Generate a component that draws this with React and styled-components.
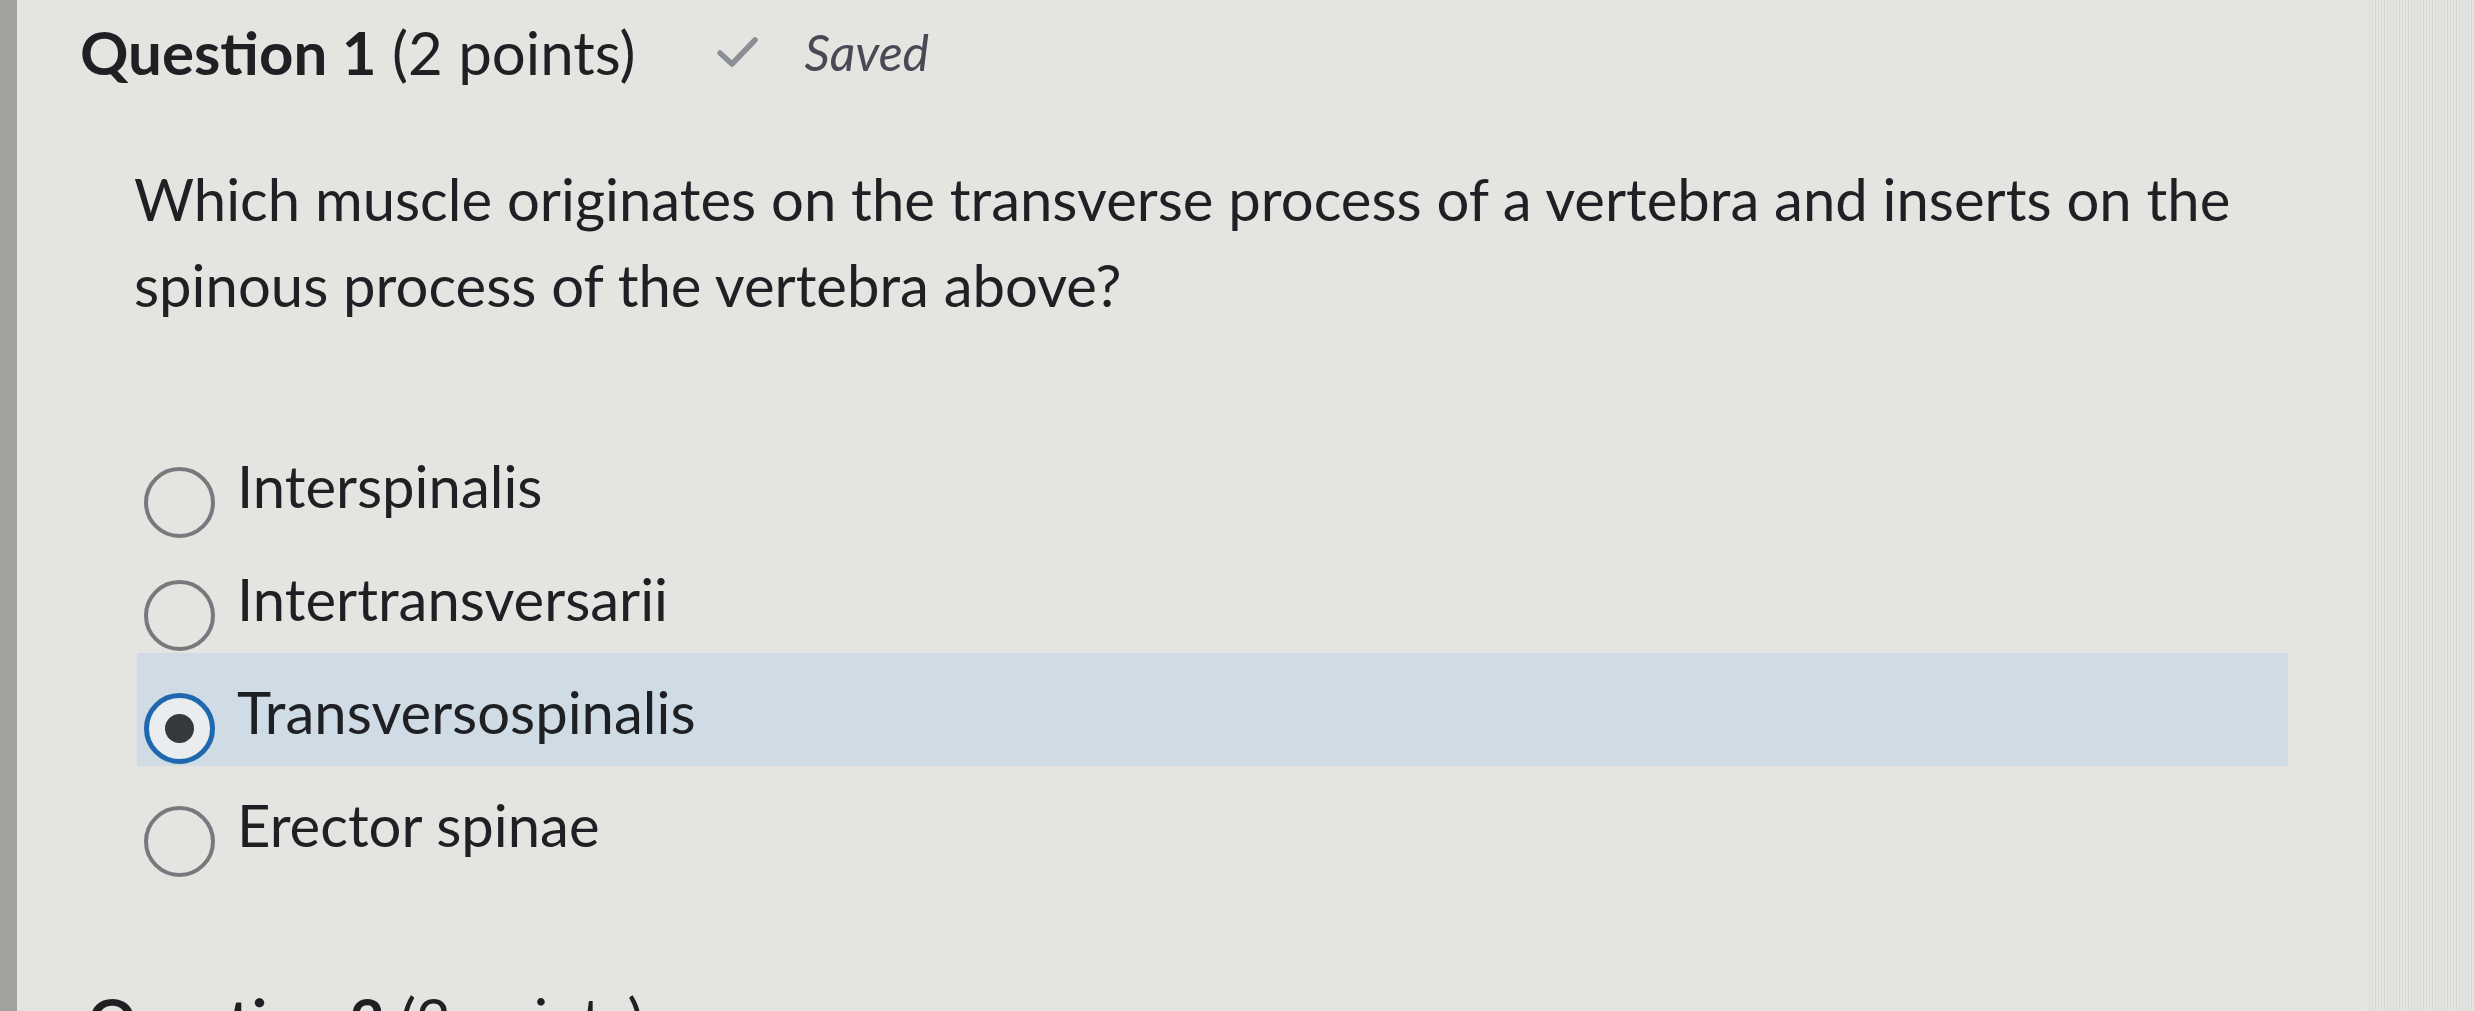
import React from "react";
import styled, { createGlobalStyle } from "styled-components";

const GlobalStyle = createGlobalStyle`
  body {
    margin: 0;
    background: #e4e5e1;
    font-family: Lato, "Open Sans", "Liberation Sans", sans-serif;
    color: #1f2024;
  }
`;

const Page = styled.div`
  display: flex;
  height: 1011px;
  overflow: hidden;
`;

const LeftEdge = styled.div`
  width: 17px;
  flex-shrink: 0;
  background: #a1a29e;
`;

const RightBand = styled.div`
  width: 107px;
  flex-shrink: 0;
  background: repeating-linear-gradient(
    90deg,
    #e5e6e2 0px,
    #e5e6e2 2px,
    #d9dad6 2px,
    #d9dad6 3px
  );
`;

const Main = styled.main`
  flex: 1;
  padding: 16px 0 0 63px;
  min-width: 0;
`;

const Header = styled.div`
  display: flex;
  align-items: center;
  height: 72px;
`;

const Title = styled.h2`
  margin: 0;
  font-size: 60px;
  line-height: 72px;
  font-weight: 400;
  white-space: nowrap;

  b {
    font-weight: 700;
  }
`;

const SavedStatus = styled.div`
  display: flex;
  align-items: center;
  margin-left: 82px;
  gap: 46px;
  color: #484955;
  font-size: 50px;
  font-style: italic;
`;

const QuestionText = styled.p`
  margin: 68px 0 0 54px;
  max-width: 2180px;
  font-size: 58px;
  line-height: 86px;
`;

const OptionList = styled.div`
  margin: 99px 0 0 57px;
  width: 2151px;
  display: flex;
  flex-direction: column;
`;

const Option = styled.label`
  display: flex;
  align-items: flex-start;
  box-sizing: border-box;
  height: 113px;
  padding: 24px 0 0 7px;
  background: ${(p) => (p.$selected ? "#cfdbe5" : "transparent")};
`;

const Radio = styled.span`
  box-sizing: border-box;
  width: 71px;
  height: 71px;
  margin-top: 16px;
  border-radius: 50%;
  flex-shrink: 0;
  display: flex;
  align-items: center;
  justify-content: center;
  border: ${(p) => (p.$checked ? "5px solid #1f67ae" : "4px solid #77797d")};
  background: ${(p) => (p.$checked ? "#e9edf0" : "transparent")};

  &::after {
    content: "";
    display: ${(p) => (p.$checked ? "block" : "none")};
    width: 29px;
    height: 29px;
    border-radius: 50%;
    background: #35383c;
  }
`;

const OptionLabel = styled.span`
  margin-left: 22px;
  font-size: 58px;
  line-height: 1.2;
`;

const NextTitle = styled(Title)`
  margin: 104px 0 0 8px;
`;

const CheckIcon = () => (
  <svg width="41" height="32" viewBox="0 0 41 32" fill="none">
    <polyline
      points="3,17 15,28 38,4"
      stroke="#8b8f94"
      strokeWidth="5.5"
      strokeLinecap="round"
      strokeLinejoin="round"
    />
  </svg>
);

const options = [
  "Interspinalis",
  "Intertransversarii",
  "Transversospinalis",
  "Erector spinae",
];

export default function App() {
  const selected = 2;

  return (
    <>
      <GlobalStyle />
      <Page>
        <LeftEdge />
        <Main>
          <Header>
            <Title>
              <b>Question 1</b> (2 points)
            </Title>
            <SavedStatus>
              <CheckIcon />
              <span>Saved</span>
            </SavedStatus>
          </Header>
          <QuestionText>
            Which muscle originates on the transverse process of a vertebra and
            inserts on the spinous process of the vertebra above?
          </QuestionText>
          <OptionList>
            {options.map((opt, i) => (
              <Option key={opt} $selected={i === selected}>
                <Radio $checked={i === selected} />
                <OptionLabel>{opt}</OptionLabel>
              </Option>
            ))}
          </OptionList>
          <NextTitle>
            <b>Question 2</b> (2 points)
          </NextTitle>
        </Main>
        <RightBand />
      </Page>
    </>
  );
}
